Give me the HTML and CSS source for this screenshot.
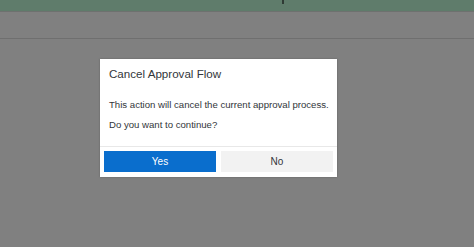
FILE: index.html
```html
<!DOCTYPE html>
<html lang="en">
<head>
    <meta charset="UTF-8">
    <title>Cancel Approval Flow</title>
    <link rel="stylesheet" href="styles.css">
</head>
<body>
    <header class="topbar">
        <span class="mark"></span>
    </header>
    <div class="toolbar"></div>
    <div class="overlay">
        <div class="dialog">
            <h4 class="dialog-title">Cancel Approval Flow</h4>
            <div class="dialog-body">
                <p>This action will cancel the current approval process.</p>
                <p>Do you want to continue?</p>
            </div>
            <div class="dialog-footer">
                <button class="btn btn-yes">Yes</button>
                <button class="btn btn-no">No</button>
            </div>
        </div>
    </div>
</body>
</html>
```

FILE: styles.css
```css
*{
    margin:0;
    padding:0;
    box-sizing: border-box;
}

body {
    width: 474px;
    height: 247px;
    overflow: hidden;
    background-color: #808080;
    font-family: "Liberation Sans", Arial, sans-serif;
}

.topbar {
    height: 12px;
    background-color: #5f7c6b;
    border-bottom: 1px solid #6e716f;
    position: relative;
}

.mark {
    position: absolute;
    left: 282px;
    top: 0;
    width: 2px;
    height: 4px;
    background-color: #2f3a34;
}

.toolbar {
    height: 27px;
    border-bottom: 1px solid #6f6f6f;
}

.overlay {
    padding-top: 20px;
    padding-left: 100px;
}

.dialog {
    width: 237px;
    height: 118px;
    background-color: white;
    box-shadow: 0 0 2px rgba(0,0,0,0.25);
}

.dialog-title {
    font-weight: normal;
    font-size: 11.6px;
    color: #32363a;
    padding: 8px 9px 0 9px;
    height: 30px;
}

.dialog-body {
    padding: 10px 9px 0 9px;
    height: 58px;
    border-bottom: 1px solid #e8e8e8;
    font-size: 9.6px;
    color: #32363a;
    white-space: nowrap;
}

.dialog-body p {
    margin-bottom: 9px;
}

.dialog-footer {
    display: flex;
    gap: 5px;
    padding: 4px 4px 0 4px;
}

.btn {
    flex: 1;
    height: 21px;
    border: none;
    font-family: inherit;
    font-size: 10px;
}

.btn-yes {
    background-color: #0a6ecd;
    color: white;
}

.btn-no {
    background-color: #f2f2f2;
    color: #32363a;
}
```
